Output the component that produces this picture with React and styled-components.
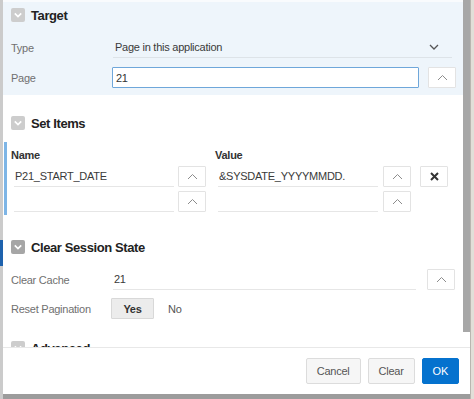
import styled, { createGlobalStyle } from "styled-components";

const GlobalStyle = createGlobalStyle`
  html, body {
    margin: 0;
    padding: 0;
  }
  body {
    width: 474px;
    height: 399px;
    overflow: hidden;
    background: #9c9c9c;
    font-family: "Liberation Sans", Arial, sans-serif;
    font-size: 11px;
    letter-spacing: -0.25px;
  }
`;

function ChevronUp() {
  return (
    <svg width="11" height="7" viewBox="0 0 11 7">
      <polyline points="1,6 5.5,1.5 10,6" fill="none" stroke="#8c8c8c" strokeWidth="1" />
    </svg>
  );
}

function ChevronDown({ color = "#555", width = 1.3 }) {
  return (
    <svg width="10" height="6" viewBox="0 0 10 6">
      <polyline points="1,1 5,5 9,1" fill="none" stroke={color} strokeWidth={width} />
    </svg>
  );
}

function Toggle({ dark }) {
  return (
    <ToggleBox $dark={dark}>
      <svg width="14" height="14" viewBox="0 0 14 14">
        <polyline points="3.8,5.4 7,8.6 10.2,5.4" fill="none" stroke="#fff" strokeWidth="1.7" />
      </svg>
    </ToggleBox>
  );
}

export default function App() {
  return (
    <Page>
      <GlobalStyle />
      <LeftEdge>
        <BlueTab />
      </LeftEdge>
      <Dialog>
        <Body>
          <Section $bg="#eef5fb" $top={6} $bottom={7}>
            <SectionHeader>
              <Toggle />
              <HeaderTitle>Target</HeaderTitle>
            </SectionHeader>
            <FieldRow $gap={15}>
              <Label>Type</Label>
              <Select>
                <Value>Page in this application</Value>
                <ChevronDown />
              </Select>
            </FieldRow>
            <FieldRow $gap={9}>
              <Label>Page</Label>
              <TextBox>21</TextBox>
              <PickButton $left={9}>
                <ChevronUp />
              </PickButton>
            </FieldRow>
          </Section>

          <Section $top={21}>
            <SectionHeader>
              <Toggle />
              <HeaderTitle>Set Items</HeaderTitle>
            </SectionHeader>
            <ItemsGrid>
              <ItemRow>
                <ColumnHead $width={204}>Name</ColumnHead>
                <ColumnHead>Value</ColumnHead>
              </ItemRow>
              <ItemRow $gap={4}>
                <LineInput $right={4}>P21_START_DATE</LineInput>
                <PickButton>
                  <ChevronUp />
                </PickButton>
                <LineInput $left={12} $right={5}>&amp;SYSDATE_YYYYMMDD.</LineInput>
                <PickButton>
                  <ChevronUp />
                </PickButton>
                <PickButton $left={9}>
                  <svg width="9" height="9" viewBox="0 0 9 9">
                    <path d="M1 1L8 8M8 1L1 8" stroke="#333" strokeWidth="2" />
                  </svg>
                </PickButton>
              </ItemRow>
              <ItemRow $gap={4}>
                <LineInput $right={4} />
                <PickButton>
                  <ChevronUp />
                </PickButton>
                <LineInput $left={12} $right={5} />
                <PickButton>
                  <ChevronUp />
                </PickButton>
              </ItemRow>
            </ItemsGrid>
          </Section>

          <Section $top={25}>
            <SectionHeader>
              <Toggle dark />
              <HeaderTitle>Clear Session State</HeaderTitle>
            </SectionHeader>
            <FieldRow $gap={15}>
              <Label>Clear Cache</Label>
              <LineInput $width={303} $left={1}>21</LineInput>
              <PickButton $left={11}>
                <ChevronUp />
              </PickButton>
            </FieldRow>
            <FieldRow $gap={8}>
              <Label>Reset Pagination</Label>
              <YesButton>Yes</YesButton>
              <NoOption>No</NoOption>
            </FieldRow>
            <SectionHeader $gap={22}>
              <Toggle />
              <HeaderTitle>Advanced</HeaderTitle>
            </SectionHeader>
          </Section>
        </Body>
        <ScrollThumb />
        <Footer>
          <FooterButton>Cancel</FooterButton>
          <FooterButton>Clear</FooterButton>
          <FooterButton $primary>OK</FooterButton>
        </Footer>
      </Dialog>
      <RightEdge />
    </Page>
  );
}

//----- Styled Components

const Page = styled.div`
  display: grid;
  grid-template-columns: 3px 467px 1fr;
  height: 399px;
  align-items: start;
`;

const LeftEdge = styled.div`
  height: 399px;
  background: #cbcbcb;
  display: flex;
  flex-direction: column;
`;

const BlueTab = styled.div`
  margin-top: 240px;
  height: 26px;
  background: #1e62ad;
`;

const RightEdge = styled.div`
  height: 399px;
  background: #e2dfd8;
  border-left: 1px solid #b9b6b0;
`;

const Dialog = styled.div`
  position: relative;
  height: 394px;
  background: #fff;
  display: flex;
  flex-direction: column;
`;

const Body = styled.div`
  height: 347px;
  overflow: hidden;
`;

const ScrollThumb = styled.div`
  position: absolute;
  top: 0;
  right: 0;
  width: 7px;
  height: 332px;
  background: #a7a7a7;
`;

const Section = styled.div`
  background: ${(p) => p.$bg || "#fff"};
  padding-top: ${(p) => p.$top || 0}px;
  padding-bottom: ${(p) => p.$bottom || 0}px;
  border-top: ${(p) => (p.$bg ? "2px solid #f9fbfd" : "none")};
`;

const SectionHeader = styled.div`
  display: flex;
  align-items: center;
  gap: 6px;
  height: 14px;
  padding-left: 8px;
  margin-top: ${(p) => p.$gap || 0}px;
`;

const ToggleBox = styled.span`
  display: flex;
  width: 14px;
  height: 14px;
  border-radius: 2px;
  background: ${(p) => (p.$dark ? "#a6a6a6" : "#cdcdcd")};
`;

const HeaderTitle = styled.span`
  font-size: 13px;
  font-weight: bold;
  letter-spacing: -0.4px;
  color: #222;
`;

const FieldRow = styled.div`
  display: flex;
  align-items: center;
  height: 21px;
  padding-left: 8px;
  margin-top: ${(p) => p.$gap || 0}px;
`;

const Label = styled.span`
  width: 101px;
  flex-shrink: 0;
  color: #707070;
`;

const Value = styled.span`
  color: #3a3a3a;
`;

const Select = styled.div`
  box-sizing: border-box;
  display: flex;
  align-items: center;
  justify-content: space-between;
  width: 339px;
  height: 21px;
  margin-left: 1px;
  padding: 0 13px 0 2px;
  border-bottom: 1px solid #dde3e8;
`;

const TextBox = styled.div`
  box-sizing: border-box;
  display: flex;
  align-items: center;
  width: 307px;
  height: 21px;
  padding-left: 3px;
  border: 1px solid #6fa7da;
  border-radius: 1px;
  background: #fff;
  color: #333;
`;

const PickButton = styled.div`
  box-sizing: border-box;
  display: flex;
  align-items: center;
  justify-content: center;
  flex-shrink: 0;
  width: 28px;
  height: 21px;
  margin-left: ${(p) => p.$left || 0}px;
  border: 1px solid #e3e3e3;
  border-radius: 1px;
  background: #fff;
`;

const ItemsGrid = styled.div`
  margin: 12px 0 0 1px;
  padding: 6px 0 3px 4px;
  border-left: 3px solid #7db5e6;
`;

const ItemRow = styled.div`
  display: flex;
  align-items: center;
  margin-top: ${(p) => p.$gap || 0}px;
`;

const ColumnHead = styled.span`
  width: ${(p) => (p.$width ? `${p.$width}px` : "auto")};
  line-height: 14px;
  font-weight: bold;
  color: #333;
`;

const LineInput = styled.div`
  box-sizing: border-box;
  display: flex;
  align-items: center;
  width: ${(p) => p.$width || 160}px;
  height: 21px;
  margin-left: ${(p) => (p.$left === undefined ? 3 : p.$left)}px;
  margin-right: ${(p) => p.$right || 0}px;
  padding-left: 1px;
  border-bottom: 1px solid #e6e6e6;
  color: #3a3a3a;
`;

const YesButton = styled.div`
  box-sizing: border-box;
  display: flex;
  align-items: center;
  justify-content: center;
  width: 43px;
  height: 21px;
  margin-left: -1px;
  border: 1px solid #d8d8d8;
  border-radius: 1px;
  background: #ececec;
  font-weight: bold;
  color: #333;
`;

const NoOption = styled.span`
  margin-left: 14px;
  color: #555;
`;

const Footer = styled.div`
  box-sizing: border-box;
  height: 47px;
  display: flex;
  align-items: center;
  justify-content: flex-end;
  gap: 7px;
  padding-right: 11px;
  border-top: 1px solid #e8e8e8;
`;

const FooterButton = styled.div`
  box-sizing: border-box;
  display: flex;
  align-items: center;
  height: 26px;
  padding: 0 10px;
  border-radius: 2px;
  border: 1px solid ${(p) => (p.$primary ? "#0572ce" : "#dcdcdc")};
  background: ${(p) => (p.$primary ? "#0572ce" : "#f6f6f6")};
  color: ${(p) => (p.$primary ? "#fff" : "#555")};
  font-size: 11px;
`;
